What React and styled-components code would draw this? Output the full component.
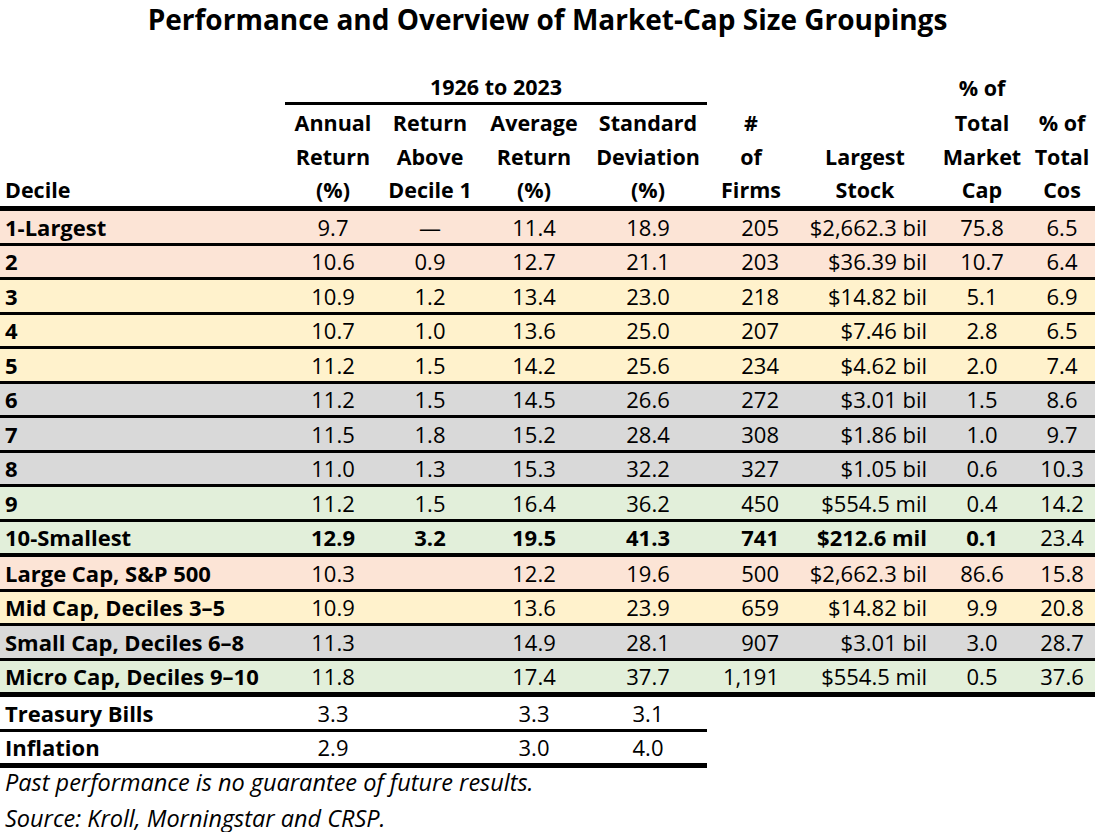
import React from "react";
import styled, { createGlobalStyle } from "styled-components";

const Global = createGlobalStyle`
  html, body { margin: 0; padding: 0; background: #ffffff; }
  body { font-family: "Open Sans", Lato, sans-serif; color: #000; }
`;

const COLS = "285px 96px 98px 110px 118px 88px 140px 94px 66px";

const COLORS = {
  pink: "#FCE4D6",
  yellow: "#FFF2CC",
  gray: "#D9D9D9",
  green: "#E2EFDA",
  white: "#FFFFFF",
};

const Page = styled.div`
  width: 1095px;
  font-size: 22px;
`;

const Title = styled.h1`
  margin: 0;
  height: 38px;
  line-height: 38px;
  font-size: 28px;
  font-weight: 700;
  text-align: center;
`;

const Head = styled.div`
  display: grid;
  grid-template-columns: ${COLS};
  grid-template-rows: 35px 34px 34px 33px;
  margin-top: 32px;
  border-bottom: 5px solid #000;
  font-weight: 700;
  font-size: 21.5px;
`;

const YearLabel = styled.div`
  grid-row: 1;
  grid-column: 2 / 6;
  border-bottom: 3px solid #000;
  display: flex;
  align-items: center;
  justify-content: center;
`;

const HeadText = styled.div`
  grid-row: ${(p) => p.$row};
  grid-column: ${(p) => p.$col};
  display: flex;
  align-items: center;
  justify-content: ${(p) => (p.$left ? "flex-start" : "center")};
  padding-left: ${(p) => (p.$left ? "5px" : "0")};
  white-space: nowrap;
`;

const Row = styled.div`
  display: grid;
  grid-template-columns: ${(p) => (p.$short ? "285px 96px 98px 110px 118px" : COLS)};
  width: ${(p) => (p.$short ? "707px" : "1095px")};
  height: 31.5px;
  background: ${(p) => p.$bg};
  border-bottom: ${(p) => p.$rule}px solid #000;
`;

const JUSTIFY = { left: "flex-start", right: "flex-end", center: "center" };

const Cell = styled.div`
  display: flex;
  align-items: center;
  justify-content: ${(p) => JUSTIFY[p.$align]};
  padding: 0 ${(p) => p.$pr || 0}px 0 ${(p) => p.$pl || 0}px;
  font-weight: ${(p) => (p.$bold ? 700 : 400)};
  white-space: nowrap;
`;

const Notes = styled.div`
  display: flex;
  flex-direction: column;
  gap: 8px;
  padding-left: 5px;
  font-style: italic;
  font-size: 23.5px;
  line-height: 28px;
`;

const COLSPEC = [
  { align: "left", pl: 5 },
  { align: "center" },
  { align: "center" },
  { align: "center" },
  { align: "center" },
  { align: "right", pr: 16 },
  { align: "right", pr: 8 },
  { align: "center" },
  { align: "center" },
];

const HEADERS = [
  ["Decile"],
  ["Annual", "Return", "(%)"],
  ["Return", "Above", "Decile 1"],
  ["Average", "Return", "(%)"],
  ["Standard", "Deviation", "(%)"],
  ["#", "of", "Firms"],
  ["Largest", "Stock"],
  ["% of", "Total", "Market", "Cap"],
  ["% of", "Total", "Cos"],
];

const ROWS = [
  { bg: "pink", rule: 3, cells: ["1-Largest", "9.7", "—", "11.4", "18.9", "205", "$2,662.3 bil", "75.8", "6.5"] },
  { bg: "pink", rule: 3, cells: ["2", "10.6", "0.9", "12.7", "21.1", "203", "$36.39 bil", "10.7", "6.4"] },
  { bg: "yellow", rule: 3, cells: ["3", "10.9", "1.2", "13.4", "23.0", "218", "$14.82 bil", "5.1", "6.9"] },
  { bg: "yellow", rule: 3, cells: ["4", "10.7", "1.0", "13.6", "25.0", "207", "$7.46 bil", "2.8", "6.5"] },
  { bg: "yellow", rule: 3, cells: ["5", "11.2", "1.5", "14.2", "25.6", "234", "$4.62 bil", "2.0", "7.4"] },
  { bg: "gray", rule: 3, cells: ["6", "11.2", "1.5", "14.5", "26.6", "272", "$3.01 bil", "1.5", "8.6"] },
  { bg: "gray", rule: 3, cells: ["7", "11.5", "1.8", "15.2", "28.4", "308", "$1.86 bil", "1.0", "9.7"] },
  { bg: "gray", rule: 3, cells: ["8", "11.0", "1.3", "15.3", "32.2", "327", "$1.05 bil", "0.6", "10.3"] },
  { bg: "green", rule: 3, cells: ["9", "11.2", "1.5", "16.4", "36.2", "450", "$554.5 mil", "0.4", "14.2"] },
  { bg: "green", rule: 4, boldTo: 8, cells: ["10-Smallest", "12.9", "3.2", "19.5", "41.3", "741", "$212.6 mil", "0.1", "23.4"] },
  { bg: "pink", rule: 3, cells: ["Large Cap, S&P 500", "10.3", "", "12.2", "19.6", "500", "$2,662.3 bil", "86.6", "15.8"] },
  { bg: "yellow", rule: 3, cells: ["Mid Cap, Deciles 3–5", "10.9", "", "13.6", "23.9", "659", "$14.82 bil", "9.9", "20.8"] },
  { bg: "gray", rule: 3, cells: ["Small Cap, Deciles 6–8", "11.3", "", "14.9", "28.1", "907", "$3.01 bil", "3.0", "28.7"] },
  { bg: "green", rule: 5, cells: ["Micro Cap, Deciles 9–10", "11.8", "", "17.4", "37.7", "1,191", "$554.5 mil", "0.5", "37.6"] },
  { bg: "white", rule: 3, short: true, cells: ["Treasury Bills", "3.3", "", "3.3", "3.1"] },
  { bg: "white", rule: 5, short: true, cells: ["Inflation", "2.9", "", "3.0", "4.0"] },
];

export default function App() {
  return (
    <Page>
      <Global />
      <Title>Performance and Overview of Market-Cap Size Groupings</Title>
      <Head>
        <YearLabel>1926 to 2023</YearLabel>
        {HEADERS.map((lines, ci) =>
          lines.map((text, li) => (
            <HeadText
              key={`${ci}-${li}`}
              $col={ci + 1}
              $row={4 - lines.length + li + 1}
              $left={ci === 0}
            >
              {text}
            </HeadText>
          ))
        )}
      </Head>
      {ROWS.map((r, ri) => (
        <Row key={ri} $bg={COLORS[r.bg]} $rule={r.rule} $short={r.short}>
          {r.cells.map((c, ci) => (
            <Cell
              key={ci}
              $align={COLSPEC[ci].align}
              $pl={COLSPEC[ci].pl}
              $pr={COLSPEC[ci].pr}
              $bold={ci === 0 || (r.boldTo && ci < r.boldTo)}
            >
              {c}
            </Cell>
          ))}
        </Row>
      ))}
      <Notes>
        <span>Past performance is no guarantee of future results.</span>
        <span>Source: Kroll, Morningstar and CRSP.</span>
      </Notes>
    </Page>
  );
}
